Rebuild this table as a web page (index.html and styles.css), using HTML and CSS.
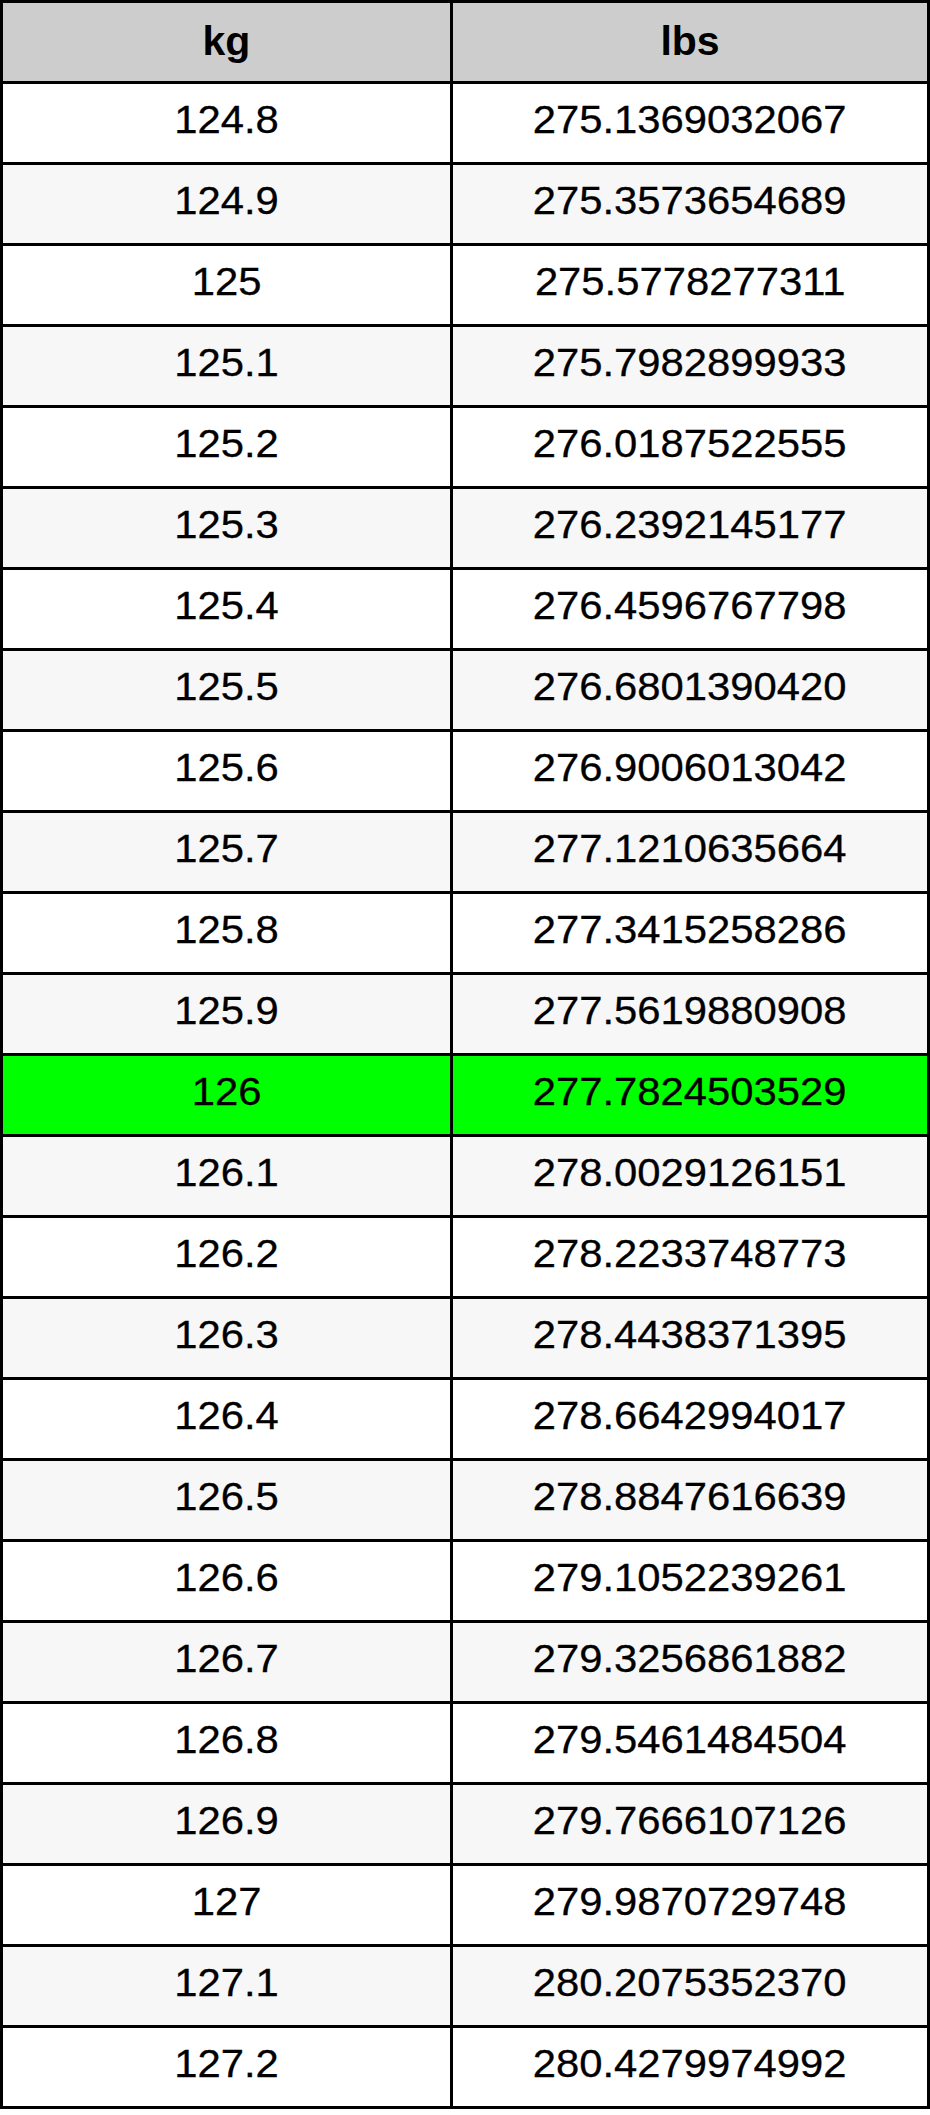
FILE: index.html
```html
<!DOCTYPE html>
<html>
<head>
<meta charset="utf-8">
<title>kg to lbs</title>
<link rel="stylesheet" href="styles.css">
</head>
<body>
<table class="conv">
<thead>
<tr><th class="c1"><span class="t">kg</span></th><th class="c2"><span class="t">lbs</span></th></tr>
</thead>
<tbody>
<tr><td class="c1"><span class="n">124.8</span></td><td class="c2"><span class="n">275.1369032067</span></td></tr>
<tr><td class="c1"><span class="n">124.9</span></td><td class="c2"><span class="n">275.3573654689</span></td></tr>
<tr><td class="c1"><span class="n">125</span></td><td class="c2"><span class="n">275.5778277311</span></td></tr>
<tr><td class="c1"><span class="n">125.1</span></td><td class="c2"><span class="n">275.7982899933</span></td></tr>
<tr><td class="c1"><span class="n">125.2</span></td><td class="c2"><span class="n">276.0187522555</span></td></tr>
<tr><td class="c1"><span class="n">125.3</span></td><td class="c2"><span class="n">276.2392145177</span></td></tr>
<tr><td class="c1"><span class="n">125.4</span></td><td class="c2"><span class="n">276.4596767798</span></td></tr>
<tr><td class="c1"><span class="n">125.5</span></td><td class="c2"><span class="n">276.6801390420</span></td></tr>
<tr><td class="c1"><span class="n">125.6</span></td><td class="c2"><span class="n">276.9006013042</span></td></tr>
<tr><td class="c1"><span class="n">125.7</span></td><td class="c2"><span class="n">277.1210635664</span></td></tr>
<tr><td class="c1"><span class="n">125.8</span></td><td class="c2"><span class="n">277.3415258286</span></td></tr>
<tr><td class="c1"><span class="n">125.9</span></td><td class="c2"><span class="n">277.5619880908</span></td></tr>
<tr class="hl"><td class="c1"><span class="n">126</span></td><td class="c2"><span class="n">277.7824503529</span></td></tr>
<tr><td class="c1"><span class="n">126.1</span></td><td class="c2"><span class="n">278.0029126151</span></td></tr>
<tr><td class="c1"><span class="n">126.2</span></td><td class="c2"><span class="n">278.2233748773</span></td></tr>
<tr><td class="c1"><span class="n">126.3</span></td><td class="c2"><span class="n">278.4438371395</span></td></tr>
<tr><td class="c1"><span class="n">126.4</span></td><td class="c2"><span class="n">278.6642994017</span></td></tr>
<tr><td class="c1"><span class="n">126.5</span></td><td class="c2"><span class="n">278.8847616639</span></td></tr>
<tr><td class="c1"><span class="n">126.6</span></td><td class="c2"><span class="n">279.1052239261</span></td></tr>
<tr><td class="c1"><span class="n">126.7</span></td><td class="c2"><span class="n">279.3256861882</span></td></tr>
<tr><td class="c1"><span class="n">126.8</span></td><td class="c2"><span class="n">279.5461484504</span></td></tr>
<tr><td class="c1"><span class="n">126.9</span></td><td class="c2"><span class="n">279.7666107126</span></td></tr>
<tr><td class="c1"><span class="n">127</span></td><td class="c2"><span class="n">279.9870729748</span></td></tr>
<tr><td class="c1"><span class="n">127.1</span></td><td class="c2"><span class="n">280.2075352370</span></td></tr>
<tr><td class="c1"><span class="n">127.2</span></td><td class="c2"><span class="n">280.4279974992</span></td></tr>
</tbody>
</table>
</body>
</html>
```
FILE: styles.css
```css
html, body {
  margin: 0;
  padding: 0;
  background: #ffffff;
}

.conv {
  width: 930px;
  table-layout: fixed;
  border-collapse: separate;
  border-spacing: 0;
  border-left: 3px solid #000;
  border-top: 3px solid #000;
  font-family: "Liberation Sans", Arial, sans-serif;
  color: #000;
  box-sizing: border-box;
}

.conv th,
.conv td {
  box-sizing: border-box;
  height: 81px;
  padding: 0;
  border-right: 3px solid #000;
  border-bottom: 3px solid #000;
  text-align: center;
  vertical-align: middle;
  white-space: nowrap;
}

.conv .c1 {
  width: 450px;
}

.conv .c2 {
  width: 477px;
}

.conv th {
  background: #cdcdcd;
  font-size: 41px;
  font-weight: bold;
  padding-bottom: 2px;
}

.conv td {
  font-size: 38px;
  font-weight: normal;
  padding-bottom: 5px;
  -webkit-text-stroke: 0.3px #000;
}

.conv tbody tr:nth-child(odd) td {
  background: #ffffff;
}

.conv tbody tr:nth-child(even) td {
  background: #f7f7f7;
}

.conv tbody tr.hl td {
  background: #00ff00;
}

.n {
  display: inline-block;
  transform: scaleX(1.1);
}
```
